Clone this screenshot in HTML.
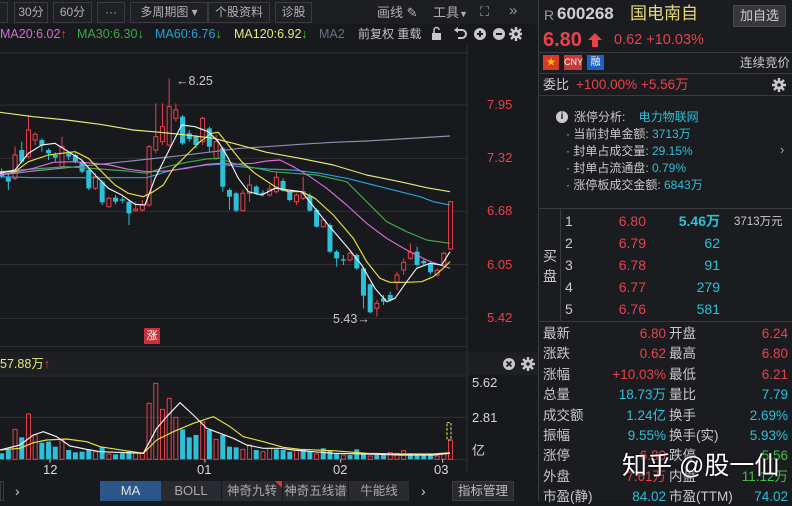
<!DOCTYPE html>
<html><head><meta charset="utf-8">
<style>
*{margin:0;padding:0;box-sizing:border-box}
body{width:792px;height:501px;overflow:hidden;background:#18191d;font-family:"Liberation Sans","Noto Sans CJK SC",sans-serif;color:#c8c8c8;position:relative;font-size:12px}
.a{position:absolute;white-space:nowrap}
.btn{position:absolute;top:2px;height:21px;border:1px solid #3a3b40;color:#b0b0b0;font-size:12px;line-height:19px;text-align:center;background:#1f2024}
.r{color:#e8424a}.c{color:#2ec0d8}.g{color:#44c044}.w{color:#d8d8d8}
.lh{line-height:18px}
</style></head><body>
<div class="a" style="left:0;top:0;width:538px;height:24px;background:#1d1e22"></div>
<div class="btn" style="left:-2px;width:10px"></div>
<div class="btn" style="left:14px;width:34px">30分</div>
<div class="btn" style="left:53px;width:39px">60分</div>
<div class="btn" style="left:97px;width:28px">···</div>
<div class="btn" style="left:130px;width:78px">多周期图 ▾</div>
<div class="btn" style="left:208px;width:62px">个股资料</div>
<div class="btn" style="left:275px;width:37px">诊股</div>
<div class="a lh" style="left:377px;top:4px;font-size:13px;color:#b0b0b0">画线 ✎</div>
<div class="a lh" style="left:433px;top:4px;font-size:13px;color:#b0b0b0">工具<span style="font-size:9px">▼</span></div>
<div class="a lh" style="left:480px;top:3px;font-size:13px;color:#999">⛶</div>
<div class="a lh" style="left:509px;top:2px;font-size:15px;color:#999">»</div>
<div class="a lh" style="left:0;top:25px;font-size:12.5px"><span style="color:#d86bd8">MA20:6.02</span><span class="r">↑</span></div>
<div class="a lh" style="left:77px;top:25px;font-size:12.5px;color:#3fa84a">MA30:6.30<span style="color:#3c3">↓</span></div>
<div class="a lh" style="left:155px;top:25px;font-size:12.5px;color:#2a9fd8">MA60:6.76<span style="color:#3c3">↓</span></div>
<div class="a lh" style="left:234px;top:25px;font-size:12.5px;color:#e5e87a">MA120:6.92<span style="color:#3c3">↓</span></div>
<div class="a lh" style="left:319px;top:25px;font-size:12.5px;color:#6a7080">MA2</div>
<div class="a lh" style="left:358px;top:25px;font-size:12px;color:#c0c0c0">前复权 重载</div>
<svg class="a" style="left:430px;top:26px" width="92" height="16" viewBox="0 0 92 16" fill="#c8c8c8">
<rect x="2" y="7" width="9" height="7"/><path d="M4 7V4a2.5 2.5 0 0 1 5 0" stroke="#c8c8c8" fill="none" stroke-width="1.5"/>
<path d="M27 4h5a4 4 0 0 1 0 8h-4" stroke="#c8c8c8" fill="none" stroke-width="2"/><path d="M24 4l4-3v6z"/>
<circle cx="50" cy="8" r="6"/><path d="M47 8h6M50 5v6" stroke="#18191d" stroke-width="2"/>
<circle cx="69" cy="8" r="6"/><path d="M66 8h6" stroke="#18191d" stroke-width="2"/>
<circle cx="86" cy="8" r="4.5"/><path d="M86 1v14M79 8h14M81 3l10 10M91 3L81 13" stroke="#c8c8c8" stroke-width="2.4"/><circle cx="86" cy="8" r="1.8" fill="#18191d"/>
</svg>
<svg id="pc" class="a" style="left:0;top:45px" width="540" height="302" viewBox="0 0 1620 906"></svg>
<div class="a r lh" style="left:487px;top:96px;font-size:13px">7.95</div>
<div class="a r lh" style="left:487px;top:149px;font-size:13px">7.32</div>
<div class="a r lh" style="left:487px;top:202px;font-size:13px">6.68</div>
<div class="a r lh" style="left:487px;top:256px;font-size:13px">6.05</div>
<div class="a r lh" style="left:487px;top:309px;font-size:13px">5.42</div>
<div class="a lh" style="left:176px;top:72px;font-size:12.5px;color:#c8c8c8">←8.25</div>
<div class="a lh" style="left:333px;top:310px;font-size:12.5px;color:#c8c8c8">5.43→</div>
<div class="a" style="left:144px;top:328px;width:16px;height:16px;background:#c8303a;color:#fff;font-size:11px;text-align:center;line-height:16px">涨</div>
<div class="a" style="left:0;top:352px;width:538px;height:23px;background:#1e1f23"></div>
<div class="a lh" style="left:0;top:355px;font-size:12.5px;color:#e5e87a">57.88万<span class="r">↑</span></div>
<svg class="a" style="left:500px;top:356px" width="38" height="16" viewBox="0 0 38 16" fill="#c8c8c8"><circle cx="9" cy="8" r="6"/><path d="M6.5 5.5l5 5M11.5 5.5l-5 5" stroke="#1e1f23" stroke-width="1.8"/><circle cx="28" cy="8" r="4.5"/><path d="M28 1v14M21 8h14M23 3l10 10M33 3L23 13" stroke="#c8c8c8" stroke-width="2.4"/><circle cx="28" cy="8" r="1.8" fill="#1e1f23"/></svg>
<svg id="vc" class="a" style="left:0;top:340px" width="540" height="161" viewBox="0 0 1620 483"></svg>
<div class="a w lh" style="left:472px;top:374px;font-size:13px">5.62</div>
<div class="a w lh" style="left:472px;top:409px;font-size:13px">2.81</div>
<div class="a w lh" style="left:472px;top:442px;font-size:13px">亿</div>
<div class="a w lh" style="left:43px;top:461px;font-size:13px">12</div>
<div class="a w lh" style="left:197px;top:461px;font-size:13px">01</div>
<div class="a w lh" style="left:333px;top:461px;font-size:13px">02</div>
<div class="a w lh" style="left:434px;top:461px;font-size:13px">03</div>
<div class="a" style="left:0;top:481px;width:538px;height:20px;background:#18191d"></div>
<div class="a" style="left:0;top:481px;width:4px;height:20px;border:1px solid #3a3b40"></div>
<div class="a" style="left:15px;top:481px;font-size:14px;color:#ccc;line-height:20px">›</div>
<div class="a" style="left:100px;top:481px;width:61px;height:20px;background:#2b568a;color:#e0e0e0;text-align:center;font-size:13px;line-height:20px">MA</div>
<div class="a" style="left:161px;top:481px;width:61px;height:20px;background:#2a2b30;color:#aaa;text-align:center;font-size:13px;line-height:20px;border-right:1px solid #18191d">BOLL</div>
<div class="a" style="left:222px;top:481px;width:61px;height:20px;background:#2a2b30;color:#aaa;text-align:center;font-size:12.5px;line-height:20px;border-right:1px solid #18191d">神奇九转</div>
<div class="a" style="left:275px;top:481px;width:0;height:0;border-left:7px solid transparent;border-top:7px solid #e0303a"></div>
<div class="a" style="left:283px;top:481px;width:66px;height:20px;background:#2a2b30;color:#aaa;text-align:center;font-size:12.5px;line-height:20px;border-right:1px solid #18191d">神奇五线谱</div>
<div class="a" style="left:349px;top:481px;width:60px;height:20px;background:#2a2b30;color:#aaa;text-align:center;font-size:12.5px;line-height:20px">牛能线</div>
<div class="a" style="left:421px;top:481px;font-size:14px;color:#ccc;line-height:20px">›</div>
<div class="a" style="left:452px;top:481px;width:62px;height:20px;background:#2a2b30;color:#bbb;text-align:center;font-size:12.5px;line-height:18px;border:1px solid #3a3b40">指标管理</div>
<div class="a" style="left:538px;top:0;width:254px;height:501px;background:#1b1c20;border-left:1px solid #3a3b40"></div>
<div class="a" style="left:544px;top:6px;font-size:14px;color:#999;line-height:18px">R</div>
<div class="a" style="left:557px;top:4px;font-size:17px;font-weight:bold;color:#d0d0d0;line-height:20px">600268</div>
<div class="a" style="left:630px;top:4px;font-size:17px;color:#e6d77a;line-height:20px">国电南自</div>
<div class="a" style="left:733px;top:5px;width:53px;height:22px;background:#36373c;border:1px solid #4a4b50;color:#d0d0d0;font-size:13px;text-align:center;line-height:20px;border-radius:2px">加自选</div>
<div class="a r" style="left:543px;top:29px;font-size:20px;font-weight:bold;line-height:22px">6.80</div>
<svg class="a" style="left:587px;top:32px" width="16" height="16"><path d="M8 1L1 8h4v7h6V8h4z" fill="#e8424a"/></svg>
<div class="a r" style="left:614px;top:31px;font-size:14.5px;line-height:18px">0.62 +10.03%</div>
<div class="a" style="left:539px;top:52px;width:253px;height:1px;background:#3a3b40"></div>
<div class="a" style="left:543px;top:55px;width:16px;height:15px;background:#d83a2a;color:#ffd200;font-size:9px;line-height:15px;text-align:center">★</div>
<div class="a" style="left:564px;top:55px;width:18px;height:15px;background:#c83a3a;color:#fff;font-size:9px;line-height:15px;text-align:center">CNY</div>
<div class="a" style="left:587px;top:55px;width:17px;height:15px;background:#2060c0;color:#fff;font-size:10px;line-height:15px;text-align:center">融</div>
<div class="a lh" style="left:740px;top:54px;font-size:12.5px;color:#c8c8c8">连续竞价</div>
<div class="a" style="left:539px;top:73px;width:253px;height:1px;background:#3a3b40"></div>
<div class="a lh" style="left:543px;top:76px;font-size:13px;color:#c8c8c8">委比</div>
<div class="a r lh" style="left:576px;top:76px;font-size:13.5px">+100.00% +5.56万</div>
<svg class="a" style="left:771px;top:77px" width="16" height="16" fill="#c8c8c8"><circle cx="8" cy="8" r="4.5"/><path d="M8 1v14M1 8h14M3 3l10 10M13 3L3 13" stroke="#c8c8c8" stroke-width="2.4"/><circle cx="8" cy="8" r="1.8" fill="#1b1c20"/></svg>
<div class="a" style="left:539px;top:95px;width:253px;height:1px;background:#3a3b40"></div>
<div class="a" style="left:556px;top:111px;width:12px;height:12px;border-radius:6px;background:#ccc;color:#1b1c20;font-size:10px;font-weight:bold;text-align:center;line-height:12px">i</div>
<div class="a lh" style="left:574px;top:108px;font-size:12px;color:#c8c8c8">涨停分析: <span style="color:#2ec0d8;margin-left:10px">电力物联网</span></div>
<div class="a lh" style="left:566px;top:125px;font-size:12px;color:#c8c8c8">· 当前封单金额: <span class="c">3713万</span></div>
<div class="a lh" style="left:566px;top:142px;font-size:12px;color:#c8c8c8">· 封单占成交量: <span class="c">29.15%</span></div>
<div class="a lh" style="left:566px;top:159px;font-size:12px;color:#c8c8c8">· 封单占流通盘: <span class="c">0.79%</span></div>
<div class="a lh" style="left:566px;top:176px;font-size:12px;color:#c8c8c8">· 涨停板成交金额: <span class="c">6843万</span></div>
<div class="a lh" style="left:780px;top:141px;font-size:13px;color:#aaa">›</div>
<div class="a" style="left:539px;top:208px;width:253px;height:1px;background:#3a3b40"></div>
<div class="a" style="left:560px;top:209px;width:1px;height:113px;background:#3a3b40"></div>
<div class="a" style="left:543px;top:246px;font-size:14px;color:#c8c8c8;line-height:20px;width:14px;white-space:normal">买<br>盘</div>
<div id="ob"></div>
<div class="a" style="left:539px;top:321px;width:253px;height:1px;background:#3a3b40"></div>
<div id="st"></div>
<div class="a" style="left:622px;top:450px;font-size:25px;color:#fff;text-shadow:0 0 2px #000;line-height:32px">知乎 @股一仙</div>
<script>
var NS="http://www.w3.org/2000/svg";
function el(s,t,a){var e=document.createElementNS(NS,t);for(var k in a)e.setAttribute(k,a[k]);s.appendChild(e);return e}
var pc=document.getElementById('pc'),vc=document.getElementById('vc');
[24,180,340,499,659,820].forEach(function(y){el(pc,'line',{x1:0,x2:1400,y1:y,y2:y,stroke:'#2e3035','stroke-width':3})});
el(pc,'line',{x1:1401,x2:1401,y1:0,y2:906,stroke:'#2e3035','stroke-width':3});
el(vc,'line',{x1:1401,x2:1401,y1:0,y2:400,stroke:'#2e3035','stroke-width':3});
el(vc,'line',{x1:0,x2:1400,y1:20,y2:20,stroke:'#2e3035','stroke-width':3});
el(vc,'line',{x1:0,x2:1400,y1:108,y2:108,stroke:'#2e3035','stroke-width':3});
el(vc,'line',{x1:0,x2:1400,y1:232,y2:232,stroke:'#2e3035','stroke-width':3});
el(vc,'line',{x1:0,x2:1400,y1:358,y2:358,stroke:'#2e3035','stroke-width':3});
var C=[['c',378,395,370,400],['c',395,410,385,435],['r',330,400,305,405],['c',315,350,290,355],['r',255,335,210,340],['r',268,285,262,300],['c',285,300,280,320],['c',315,325,310,345],['c',330,338,322,350],['r',305,365,275,370],['c',325,335,320,345],['c',330,350,325,355],['c',350,380,345,385],['c',375,430,370,435],['r',395,430,385,435],['c',410,472,405,480],['r',460,485,455,488],['c',458,470,450,478],['c',463,467,455,475],['c',470,505,465,540],['r',492,497,470,500],['r',480,495,465,500],['r',305,480,300,485],['r',275,315,175,325],['r',245,290,175,300],['r',185,300,100,305],['r',195,220,175,230],['c',215,295,210,300],['c',265,282,255,290],['c',275,300,270,310],['r',220,290,215,300],['c',250,305,245,320],['r',290,340,270,345],['c',310,425,305,440],['c',435,455,430,495],['c',445,497,440,502],['r',445,497,435,500],['r',420,445,390,470],['c',425,445,420,450],['c',443,447,435,455],['r',432,450,420,455],['r',397,440,380,445],['c',408,437,400,440],['c',440,465,435,470],['r',450,470,445,480],['r',440,460,395,465],['c',452,497,445,500],['c',495,545,490,548],['r',525,545,520,548],['c',540,620,535,625],['c',620,640,615,665],['c',643,647,630,660],['r',625,645,620,650],['c',630,670,625,675],['c',670,752,665,790],['c',718,802,715,805],['r',775,790,765,815],['c',760,770,750,780],['c',750,765,740,770],['r',690,712,680,735],['r',652,675,640,690],['r',622,640,595,645],['c',620,660,605,665],['c',648,655,642,660],['c',655,682,650,688],['r',676,690,670,695],['r',625,660,620,665],['r',470,612,468,615]];
var V=[['c',340],['c',330],['r',268],['c',292],['r',222],['r',285],['c',308],['c',305],['c',320],['r',300],['c',330],['c',337],['c',335],['c',328],['r',335],['c',322],['r',342],['c',343],['c',340],['c',335],['r',338],['r',338],['r',190],['r',130],['r',208],['r',175],['r',232],['c',268],['c',292],['c',285],['r',246],['c',270],['r',298],['c',285],['c',320],['c',322],['r',328],['r',315],['c',330],['r',335],['r',325],['c',328],['c',330],['c',335],['r',330],['c',330],['c',335],['r',342],['c',325],['c',332],['c',340],['r',345],['c',345],['c',328],['c',340],['r',348],['c',345],['c',340],['r',338],['r',340],['r',332],['c',340],['c',342],['c',345],['c',342],['r',348],['r',340],['r',300]];
var RED='#e8424a',CY='#2ec0d8';
C.forEach(function(d,i){var x=5+i*20.1;var col=d[0]=='r'?RED:CY;
 el(pc,'line',{x1:x,x2:x,y1:d[3],y2:d[4],stroke:col,'stroke-width':3});
 if(d[0]=='r'){el(pc,'rect',{x:x-6,y:d[1],width:12,height:Math.max(d[2]-d[1],3),fill:'#18191d',stroke:col,'stroke-width':3})}
 else el(pc,'rect',{x:x-7.5,y:d[1],width:15,height:Math.max(d[2]-d[1],3),fill:col});});
V.forEach(function(d,i){var x=5+i*20.1;
 if(d[0]=='r')el(vc,'rect',{x:x-6,y:d[1],width:12,height:358-d[1],fill:'none',stroke:RED,'stroke-width':3});
 else el(vc,'rect',{x:x-7.5,y:d[1],width:15,height:358-d[1],fill:CY});});
el(vc,'rect',{x:1341,y:248,width:12,height:52,fill:'none',stroke:'#e5e87a','stroke-width':3,'stroke-dasharray':'8 5'});
function pl(s,pts,col){el(s,'polyline',{points:pts,fill:'none',stroke:col,'stroke-width':3.5,'stroke-linejoin':'round'})}
pl(pc,'0,390 100,378 200,368 300,358 420,345 540,332 640,320 720,310 800,305 900,298 1000,292 1100,288 1200,282 1300,276 1350,273','#8890b0');
pl(pc,'0,202 100,215 200,225 300,238 400,255 480,262 560,270 640,280 700,295 800,322 900,340 1000,360 1100,390 1200,410 1280,428 1350,440','#e5e87a');
pl(pc,'0,395 100,398 200,398 300,398 440,398 500,380 560,368 620,360 660,358 720,365 800,372 880,375 960,385 1040,400 1120,420 1200,440 1260,455 1300,470 1350,480','#2a9fd8');
pl(pc,'0,380 100,372 200,365 300,372 380,378 440,385 500,365 560,352 620,342 660,340 700,355 760,368 820,380 880,385 950,390 1040,410 1100,470 1160,530 1220,560 1280,585 1350,595','#3fa84a');
pl(pc,'0,390 100,370 160,352 220,350 280,355 330,360 380,372 440,380 500,378 560,370 620,358 660,355 700,358 760,355 800,348 840,345 880,365 930,395 980,430 1040,480 1100,535 1160,580 1220,615 1280,645 1320,660 1350,670','#d86bd8');
pl(pc,'0,380 45,380 85,350 145,330 185,325 225,320 265,340 305,380 345,420 385,445 430,455 460,440 490,420 520,370 560,330 600,290 635,265 655,262 685,300 725,350 765,385 825,425 865,440 905,440 945,460 1000,510 1060,580 1100,650 1140,700 1170,712 1220,712 1265,710 1300,695 1330,670 1350,650','#e8e040');
pl(pc,'0,385 45,375 85,325 125,300 165,295 205,320 245,345 285,390 325,430 365,450 405,478 435,480 465,400 505,320 545,240 585,245 625,260 655,290 685,340 715,400 745,440 785,450 825,430 865,435 905,440 945,490 985,540 1045,610 1085,660 1125,730 1160,770 1185,760 1220,710 1250,670 1290,655 1325,660 1350,620','#f0f0f0');
pl(vc,'0,330 60,325 100,308 140,300 200,297 260,305 300,320 350,328 430,340 470,300 520,275 580,250 640,230 690,260 730,290 790,305 850,322 900,328 1000,332 1100,340 1200,342 1300,342 1350,338','#e8e040');
pl(vc,'0,330 60,315 100,285 130,275 170,290 210,318 260,328 300,335 350,337 430,340 470,265 500,230 540,188 580,225 620,265 660,280 700,295 740,315 790,325 840,325 880,330 940,335 1000,340 1100,342 1200,345 1300,345 1350,340','#f0f0f0');
[150,615,1022,1328].forEach(function(x){el(vc,'line',{x1:x,x2:x,y1:358,y2:368,stroke:'#ccc','stroke-width':3})});
var ob=[['1','6.80','5.46万'],['2','6.79','62'],['3','6.78','91'],['4','6.77','279'],['5','6.76','581']],h='';
ob.forEach(function(r,i){var y=212+i*22;
 h+='<div class="a lh" style="left:565px;top:'+y+'px;font-size:14px;color:#c8c8c8">'+r[0]+'</div>';
 h+='<div class="a r lh" style="left:590px;top:'+y+'px;width:56px;text-align:right;font-size:14px">'+r[1]+'</div>';
 h+='<div class="a c lh" style="left:650px;top:'+y+'px;width:70px;text-align:right;font-size:14px;'+(i==0?'font-weight:bold':'')+'">'+r[2]+'</div>';});
h+='<div class="a lh" style="left:734px;top:213px;font-size:11.5px;color:#c8c8c8">3713万元</div>';
document.getElementById('ob').innerHTML=h;
var st=[['最新','6.80','r','开盘','6.24','r'],['涨跌','0.62','r','最高','6.80','r'],['涨幅','+10.03%','r','最低','6.21','r'],['总量','18.73万','c','量比','7.79','c'],['成交额','1.24亿','c','换手','2.69%','c'],['振幅','9.55%','c','换手(实)','5.93%','c'],['涨停','6.80','r','跌停','5.56','g'],['外盘','7.61万','r','内盘','11.12万','g'],['市盈(静)','84.02','c','市盈(TTM)','74.02','c']];
h='';st.forEach(function(r,i){var y=325+i*20.4;
 h+='<div class="a lh" style="left:543px;top:'+y+'px;font-size:13.5px;color:#c8c8c8">'+r[0]+'</div>';
 h+='<div class="a lh '+r[2]+'" style="left:600px;top:'+y+'px;width:66px;text-align:right;font-size:13.5px">'+r[1]+'</div>';
 h+='<div class="a lh" style="left:669px;top:'+y+'px;font-size:13.5px;color:#c8c8c8">'+r[3]+'</div>';
 h+='<div class="a lh '+r[5]+'" style="left:720px;top:'+y+'px;width:68px;text-align:right;font-size:13.5px">'+r[4]+'</div>';});
document.getElementById('st').innerHTML=h;
</script>
</body></html>
